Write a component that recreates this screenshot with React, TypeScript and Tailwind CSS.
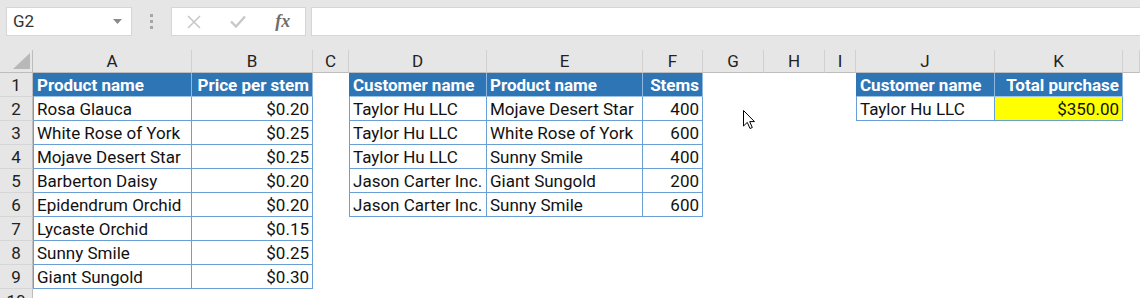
import React from "react";

const COLS = ["", "A", "B", "C", "D", "E", "F", "G", "H", "I", "J", "K", ""];

type Cell = { text?: string; head?: boolean; right?: boolean; first?: boolean; yellow?: boolean };

const t1: [string, string][] = [
  ["Rosa Glauca", "$0.20"],
  ["White Rose of York", "$0.25"],
  ["Mojave Desert Star", "$0.25"],
  ["Barberton Daisy", "$0.20"],
  ["Epidendrum Orchid", "$0.20"],
  ["Lycaste Orchid", "$0.15"],
  ["Sunny Smile", "$0.25"],
  ["Giant Sungold", "$0.30"],
];

const t2: [string, string, string][] = [
  ["Taylor Hu LLC", "Mojave Desert Star", "400"],
  ["Taylor Hu LLC", "White Rose of York", "600"],
  ["Taylor Hu LLC", "Sunny Smile", "400"],
  ["Jason Carter Inc.", "Giant Sungold", "200"],
  ["Jason Carter Inc.", "Sunny Smile", "600"],
];

function getCell(r: number, c: number): Cell | null {
  if (c >= 1 && c <= 2 && r >= 1 && r <= 9) {
    if (r === 1) return { text: c === 1 ? "Product name" : "Price per stem", head: true, right: c === 2, first: c === 1 };
    const row = t1[r - 2];
    return { text: row[c - 1], right: c === 2, first: c === 1 };
  }
  if (c >= 4 && c <= 6 && r >= 1 && r <= 6) {
    if (r === 1) {
      const h = ["Customer name", "Product name", "Stems"];
      return { text: h[c - 4], head: true, right: c === 6, first: c === 4 };
    }
    const row = t2[r - 2];
    return { text: row[c - 4], right: c === 6, first: c === 4 };
  }
  if (c >= 10 && c <= 11 && r >= 1 && r <= 2) {
    if (r === 1) return { text: c === 10 ? "Customer name" : "Total purchase", head: true, right: c === 11, first: c === 10 };
    return { text: c === 10 ? "Taylor Hu LLC" : "$350.00", right: c === 11, first: c === 10, yellow: c === 11 };
  }
  return null;
}

function Toolbar() {
  return (
    <div className="h-[50px] bg-[#e6e6e6] flex items-start pt-[7px]">
      <div className="ml-[6px] w-[126px] h-[29px] bg-white border border-[#d6d6d6] flex items-center justify-between pl-[6px] pr-[9px]">
        <span className="text-[17px] text-[#333] pt-px">G2</span>
        <svg width="9" height="5" viewBox="0 0 9 5">
          <path d="M0 0 L9 0 L4.5 5 Z" fill="#8a8a8a" />
        </svg>
      </div>
      <div className="w-[39px] h-[29px] flex flex-col items-center justify-center gap-[3px]">
        <div className="w-[3px] h-[3px] bg-[#a6a6a6]" />
        <div className="w-[3px] h-[3px] bg-[#a6a6a6]" />
        <div className="w-[3px] h-[3px] bg-[#a6a6a6]" />
      </div>
      <div className="w-[135px] h-[29px] bg-white border border-[#d6d6d6] flex items-center">
        <div className="w-[45px] flex justify-center">
          <svg width="14" height="14" viewBox="0 0 14 14">
            <path d="M1 1 L13 13 M13 1 L1 13" stroke="#c8c8c8" strokeWidth="1.6" />
          </svg>
        </div>
        <div className="w-[45px] flex justify-center">
          <svg width="16" height="13" viewBox="0 0 16 13">
            <path d="M1 6.5 L6 11.5 L15 1.5" stroke="#c8c8c8" strokeWidth="2.4" fill="none" />
          </svg>
        </div>
        <div className="w-[45px] flex justify-center">
          <span className="italic text-[18px] text-[#6e6e6e] font-bold" style={{ fontFamily: '"Liberation Serif", serif' }}>
            fx
          </span>
        </div>
      </div>
      <div className="ml-[5px] flex-1 h-[29px] bg-white border border-[#d6d6d6] border-r-0" />
    </div>
  );
}

export default function App() {
  const rows = Array.from({ length: 11 }, (_, i) => i);
  return (
    <div
      className="w-[1140px] h-[298px] overflow-hidden bg-white relative"
      style={{ fontFamily: "Roboto, 'Liberation Sans', sans-serif" }}
    >
      <Toolbar />
      <div className="grid grid-cols-[33px_159px_121px_36px_138px_156px_60px_61px_61px_31px_139px_128px_1fr] auto-rows-[24px] [grid-template-rows:23px]">
        {rows.map((r) =>
          COLS.map((col, c) => {
            const key = `${r}-${c}`;
            if (r === 0) {
              if (c === 0) {
                return (
                  <div key={key} className="h-[23px] bg-[#e6e6e6] border-b border-r border-[#bdbdbd] flex items-end justify-end pr-[2px] pb-[3px]">
                    <svg width="17" height="16" viewBox="0 0 17 16">
                      <path d="M17 0 L17 16 L0 16 Z" fill="#b8b8b8" />
                    </svg>
                  </div>
                );
              }
              return (
                <div
                  key={key}
                  className="h-[23px] bg-[#e6e6e6] border-b border-[#bdbdbd] border-r-[1px] [border-right-color:#d0d0d0] flex items-center justify-center text-[17px] text-[#222] pt-[2px]"
                >
                  {col}
                </div>
              );
            }
            if (c === 0) {
              return (
                <div key={key} className="bg-[#e6e6e6] border-r border-[#bdbdbd] border-b-[1px] [border-bottom-color:#d6d6d6] flex items-center justify-center text-[17px] text-[#222] pt-[2px]">
                  {r}
                </div>
              );
            }
            const cell = getCell(r, c);
            if (!cell) return <div key={key} className="bg-white" />;
            const base = "flex items-center px-[3px] pt-[2px] text-[17px] whitespace-nowrap overflow-hidden border-b border-r";
            const align = cell.right ? " justify-end" : " justify-start";
            if (cell.head) {
              return (
                <div
                  key={key}
                  className={
                    base +
                    align +
                    " bg-[#2e75b6] text-white font-bold border-b-[#9dc3e6] border-r-[#8fb8e0]" +
                    (cell.first ? " border-l border-l-[#2e75b6]" : "")
                  }
                >
                  {cell.text}
                </div>
              );
            }
            return (
              <div
                key={key}
                className={
                  base +
                  align +
                  " text-[#111] border-[#6a9fd6]" +
                  (cell.first ? " border-l" : "") +
                  (cell.yellow ? " bg-[#ffff00]" : " bg-white")
                }
              >
                {cell.text}
              </div>
            );
          })
        )}
      </div>
      <svg className="absolute left-[743px] top-[110px]" width="13" height="20" viewBox="0 0 13 20">
        <path d="M0.5 0.5 L0.5 16 L4.3 12.4 L7 18.5 L9.3 17.5 L6.7 11.6 L11.5 11.6 Z" fill="white" stroke="black" strokeWidth="1" strokeLinejoin="round" />
      </svg>
    </div>
  );
}
